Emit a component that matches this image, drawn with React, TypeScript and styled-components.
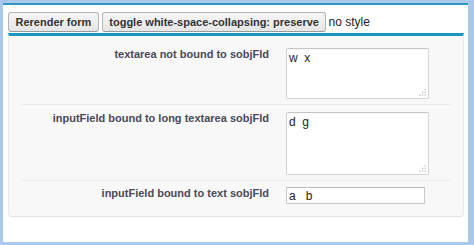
import styled, { createGlobalStyle } from 'styled-components';

const GlobalStyle = createGlobalStyle`
  html, body {
    margin: 0;
    padding: 0;
    background: #ffffff;
  }
  body {
    font-family: "Liberation Sans", Arial, sans-serif;
  }
`;

const Frame = styled.div`
  box-sizing: border-box;
  width: 474px;
  height: 245px;
  border-style: solid;
  border-color: #a9c8ec;
  border-width: 3px 6px 3px 3px;
  background: #ffffff;
  overflow: hidden;
`;

const TopRule = styled.div`
  height: 2px;
  background: #2f97c8;
`;

const Content = styled.div`
  padding: 7px 4px 0 5px;
`;

const Toolbar = styled.div`
  display: flex;
  align-items: center;
  gap: 3px;
  height: 20px;
`;

const Button = styled.button`
  box-sizing: border-box;
  height: 20px;
  padding: 0 6.5px;
  margin: 0;
  border: 1px solid #b5b5b5;
  border-bottom-color: #9a9a9a;
  border-radius: 3px;
  background: linear-gradient(#f6f6f6, #e6e6e6);
  color: #333333;
  font-family: "Liberation Sans", Arial, sans-serif;
  font-size: 11px;
  font-weight: bold;
  white-space: nowrap;
  cursor: pointer;
`;

const Note = styled.span`
  margin-left: -1px;
  font-size: 12px;
  color: #222222;
`;

const Panel = styled.div`
  margin-top: 1px;
  border-top: 3px solid #1797c0;
  border-left: 1px solid #eaeaea;
  border-right: 1px solid #eaeaea;
  border-bottom: 1px solid #e3e3e3;
  border-radius: 0 0 4px 4px;
  background: #f8f8f8;
  padding: 5px 0 7px;
`;

const Row = styled.div<{ $last?: boolean }>`
  display: grid;
  grid-template-columns: 248px 1fr;
  column-gap: 17px;
  align-items: start;
  margin: 0 12px;
  padding: ${(p) => (p.$last ? '6px 0 5px' : '7px 0 5px')};
  border-bottom: ${(p) => (p.$last ? 'none' : '1px solid #ebebeb')};
`;

const Label = styled.label`
  text-align: right;
  font-size: 11px;
  line-height: 13px;
  font-weight: bold;
  color: #4a4a56;
  white-space: nowrap;
`;

const Field = styled.div`
  position: relative;
  width: fit-content;
`;

const Area = styled.textarea<{ $h: number }>`
  box-sizing: border-box;
  display: block;
  width: 143px;
  height: ${(p) => p.$h}px;
  margin: 0;
  padding: 2px 2px;
  border: 1px solid #d3d3d3;
  border-top-color: #c6c6c6;
  border-radius: 2px;
  background: #ffffff;
  box-shadow: inset 0 1px 1px rgba(0, 0, 0, 0.04);
  font-family: "Liberation Sans", Arial, sans-serif;
  font-size: 12px;
  line-height: 14px;
  color: #1e1e1e;
  white-space: pre-wrap;
  resize: none;
  outline: none;
`;

const Grip = styled.svg`
  position: absolute;
  right: 3px;
  bottom: 3px;
  width: 7px;
  height: 7px;
  pointer-events: none;
`;

const TextInput = styled.input`
  box-sizing: border-box;
  display: block;
  width: 139px;
  height: 17px;
  margin: 0;
  padding: 0 2px;
  border: 1px solid #c9c9c9;
  border-top-color: #bdbdbd;
  background: #ffffff;
  font-family: "Liberation Sans", Arial, sans-serif;
  font-size: 12px;
  color: #1e1e1e;
  outline: none;
`;

const ResizeGrip = () => (
  <Grip viewBox="0 0 7 7">
    <g fill="#b4b4b4">
      <rect x="5.5" y="0" width="1.2" height="1.2" />
      <rect x="3" y="2.7" width="1.2" height="1.2" />
      <rect x="5.5" y="2.7" width="1.2" height="1.2" />
      <rect x="0.5" y="5.5" width="1.2" height="1.2" />
      <rect x="3" y="5.5" width="1.2" height="1.2" />
      <rect x="5.5" y="5.5" width="1.2" height="1.2" />
    </g>
  </Grip>
);

export default function App() {
  return (
    <>
      <GlobalStyle />
      <Frame>
        <TopRule />
        <Content>
          <Toolbar>
            <Button>Rerender form</Button>
            <Button>toggle white-space-collapsing: preserve</Button>
            <Note>no style</Note>
          </Toolbar>
          <Panel>
            <Row>
              <Label>textarea not bound to sobjFld</Label>
              <Field>
                <Area $h={51} defaultValue={'w  x'} />
                <ResizeGrip />
              </Field>
            </Row>
            <Row>
              <Label>inputField bound to long textarea sobjFld</Label>
              <Field>
                <Area $h={63} defaultValue={'d  g'} />
                <ResizeGrip />
              </Field>
            </Row>
            <Row $last>
              <Label>inputField bound to text sobjFld</Label>
              <Field>
                <TextInput defaultValue={'a   b'} />
              </Field>
            </Row>
          </Panel>
        </Content>
      </Frame>
    </>
  );
}
